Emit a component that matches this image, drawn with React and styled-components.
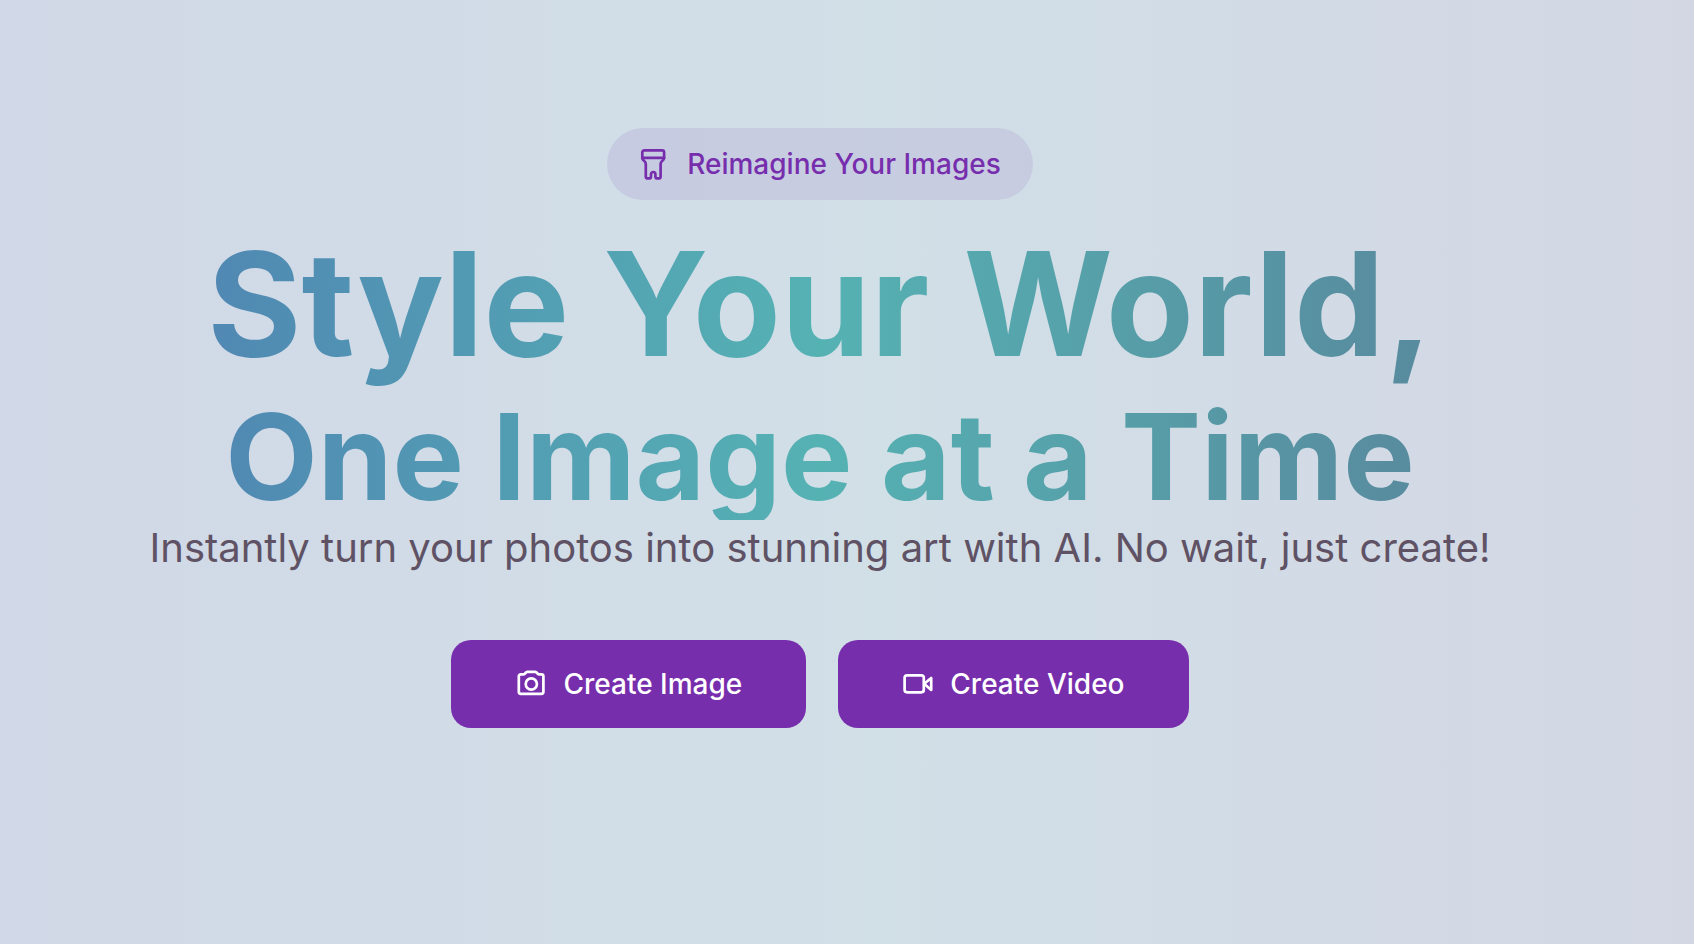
import React from 'react'
import styled, { createGlobalStyle } from 'styled-components'

const GlobalStyle = createGlobalStyle`
  body {
    margin: 0;
    font-family: Inter, sans-serif;
  }
`

const Hero = styled.main`
  box-sizing: border-box;
  min-height: 100vh;
  display: flex;
  flex-direction: column;
  align-items: center;
  padding: 128px 54px 128px 0;
  text-align: center;
  background: linear-gradient(to right, #d1d8e7, #d1dfe7 52%, #d3d7e4);
`

const Pill = styled.div`
  display: flex;
  align-items: center;
  gap: 16px;
  padding: 16px 32px;
  border-radius: 36px;
  background: rgba(119, 46, 173, 0.1);
  color: #772ead;
  font-size: 28px;
  font-weight: 500;
  line-height: 40px;
`

const Title = styled.h1`
  margin: 32px 0 0;
  font-size: 144px;
  font-weight: 700;
  line-height: 1;
  color: transparent;
  background: linear-gradient(to right, #5088b3, #55b2b3 50%, #588a9e);
  -webkit-background-clip: text;
  background-clip: text;

  span {
    font-size: 120px;
  }
`

const Tagline = styled.p`
  margin: 0;
  color: #5f5265;
  font-size: 40px;
  line-height: 56px;
`

const Actions = styled.div`
  display: flex;
  flex-wrap: wrap;
  justify-content: center;
  gap: 32px;
  margin-top: 64px;
`

const Button = styled.button`
  display: flex;
  align-items: center;
  gap: 16px;
  padding: 24px 64px;
  border: 0;
  border-radius: 20px;
  background: #772ead;
  color: #fff;
  font-family: inherit;
  font-size: 28px;
  font-weight: 500;
  line-height: 40px;
  cursor: pointer;
`

const Icon = styled.svg`
  width: 32px;
  height: 32px;
  flex: none;
  fill: none;
  stroke: currentColor;
  stroke-width: 2.7;
  stroke-linecap: round;
  stroke-linejoin: round;
`

const BrushIcon = () => (
  <Icon viewBox="0 0 32 32" aria-hidden="true">
    <path d="M3.3 9.9V4.3a2 2 0 0 1 2-2h17.8a2 2 0 0 1 2 2v5.6z" />
    <path d="M3.3 9.9c0 3 3.5 2.8 3.5 6v12.500a2 2 0 0 0 2 2H10a2 2 0 0 0 2-2v-2.200a2.200 2.200 0 0 1 4.400 0v2.200a2 2 0 0 0 2 2h1.200a2 2 0 0 0 2-2V15.900c0-3.200 3.500-3 3.500-6" />
  </Icon>
)

const CameraIcon = () => (
  <Icon viewBox="0 0 32 32" aria-hidden="true">
    <path d="M8.600 6.300c2 0 1.700-2.400 3.700-2.400h8c2 0 1.700 2.400 3.700 2.400h2.400a2 2 0 0 1 2 2v15.500a2 2 0 0 1-2 2H5.800a2 2 0 0 1-2-2V8.300a2 2 0 0 1 2-2z" />
    <circle cx="16.300" cy="16" r="5.600" />
  </Icon>
)

const VideoIcon = () => (
  <Icon viewBox="0 0 32 32" aria-hidden="true">
    <rect x="2.600" y="7.300" width="19.200" height="17" rx="2.500" />
    <path d="M22.200 15.800l7-5.800v12z" />
  </Icon>
)

const App = () => {
  return (
    <>
      <GlobalStyle />
      <Hero>
        <Pill>
          <BrushIcon />
          Reimagine Your Images
        </Pill>
        <Title>
          Style Your World,
          <br />
          <span>One Image at a Time</span>
        </Title>
        <Tagline>
          Instantly turn your photos into stunning art with AI. No wait, just create!
        </Tagline>
        <Actions>
          <Button type="button">
            <CameraIcon />
            Create Image
          </Button>
          <Button type="button">
            <VideoIcon />
            Create Video
          </Button>
        </Actions>
      </Hero>
    </>
  )
}

export default App
